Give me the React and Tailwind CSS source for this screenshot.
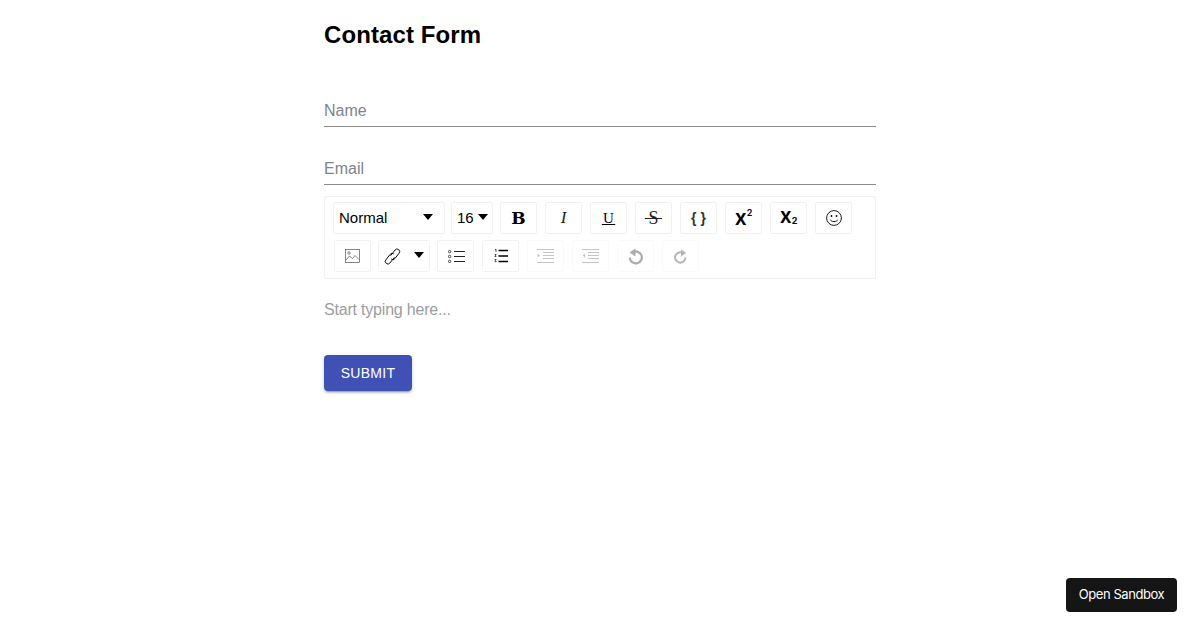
const Caret = ({ className = '' }) => (
  <span className={`w-0 h-0 border-x-[5.5px] border-x-transparent border-t-[6px] border-t-black ${className}`} />
);

const ToolButton = ({ children, dim }) => (
  <div className={`w-[37px] h-[32px] mx-[4px] flex items-center justify-center border rounded-[2px] ${dim ? 'border-[#fafafa]' : 'border-[#f1f1f1]'}`}>
    {children}
  </div>
);

const ImageIcon = () => (
  <svg width="15" height="14" viewBox="0 0 15 14" fill="none" stroke="#555" strokeWidth="0.7">
    <rect x="0.5" y="0.5" width="14" height="13" />
    <circle cx="4" cy="4" r="1.2" />
    <path d="M1 11l3.5-4 3 2.5 2.5-3 4 4" />
  </svg>
);

const LinkIcon = () => (
  <svg width="17" height="17" viewBox="0 0 16 16" fill="none" stroke="#000" strokeWidth="0.9">
    <path d="M6.2 7.2L10.4 1.9a2.4 2.4 0 0 1 3.4-.4 2.4 2.4 0 0 1 .4 3.4L10.2 10a2.4 2.4 0 0 1-3.4.4" />
    <path d="M9.8 8.8L5.6 14.1a2.4 2.4 0 0 1-3.4.4 2.4 2.4 0 0 1-.4-3.4L5.8 6a2.4 2.4 0 0 1 3.4-.4" />
  </svg>
);

const BulletIcon = () => (
  <svg className="ml-[1px]" width="17" height="13" viewBox="0 0 17 13" fill="none" stroke="#222">
    <circle cx="1.6" cy="1.6" r="1.2" strokeWidth="0.8" />
    <circle cx="1.6" cy="6.5" r="1.2" strokeWidth="0.8" />
    <circle cx="1.6" cy="11.4" r="1.2" strokeWidth="0.8" />
    <path d="M6 1.5h11M6 6.5h11M6 11.5h11" strokeWidth="1.1" />
  </svg>
);

const NumberIcon = () => (
  <svg width="14" height="14" viewBox="0 0 14 14" fill="none" stroke="#000">
    <path d="M4.5 1.5H14M4.5 7H14M4.5 12.5H14" strokeWidth="1.3" />
    <path d="M1 0.6l1-.3V3M0.6 5.6h1.6l-1.4 2h1.6M0.6 10.5h1.6l-.8 1 .8 1.2H.6" strokeWidth="0.7" />
  </svg>
);

const IndentIcon = ({ out }) => (
  <svg width="17" height="14" viewBox="0 0 17 14" fill="none" stroke="#c4c4c4">
    <path d="M0 0.5h17M6 3.5h11M6 6.5h11M6 9.5h11M0 13.5h17" />
    <path d={out ? 'M3 4.5v4L0.5 6.5z' : 'M0.5 4.5v4L3 6.5z'} fill="#c4c4c4" stroke="none" />
  </svg>
);

const UndoIcon = () => (
  <svg width="15" height="17" viewBox="0 0 15 17" fill="none">
    <path d="M4.2 4.6a6 6 0 1 1-2.4 5" stroke="#aaa" strokeWidth="2.2" />
    <path d="M7.5 0.4v8L1.6 4.4z" fill="#aaa" />
  </svg>
);

const RedoIcon = () => (
  <svg width="13" height="15" viewBox="0 0 13 15" fill="none">
    <path d="M9.3 4.2a5.2 5.2 0 1 0 2.2 4.3" stroke="#b4b4b4" strokeWidth="2" />
    <path d="M7 0.4v7l5.2-3.5z" fill="#b4b4b4" />
  </svg>
);

const SmileIcon = () => (
  <svg width="16" height="16" viewBox="0 0 16 16" fill="none" stroke="#000">
    <circle cx="8" cy="8" r="7.4" strokeWidth="0.9" />
    <circle cx="5.5" cy="6" r="0.9" fill="#000" stroke="none" />
    <circle cx="10.5" cy="6" r="0.9" fill="#000" stroke="none" />
    <path d="M4.2 9.6c1 2.6 6.6 2.6 7.6 0" strokeWidth="0.9" />
  </svg>
);

const App = () => {
  return (
    <div className="relative h-[630px] bg-white font-['Liberation_Sans',sans-serif]">
      <div className="w-[552px] mx-auto">
        <h1 className="pt-[20px] text-[24px] tracking-[0.1px] leading-[29px] font-bold text-black">Contact Form</h1>

        <div className="mt-[48px] h-[30px] pt-[2px] border-b border-[#8c8c8c] text-[16px] leading-[24px] text-[#80848a]">Name</div>
        <div className="mt-[28px] h-[30px] pt-[2px] border-b border-[#8c8c8c] text-[16px] leading-[24px] text-[#80848a]">Email</div>

        <div className="mt-[11px] h-[83px] border border-[#f1f1f1] rounded-[2px] pt-[5px] pl-[4px] flex flex-col gap-[6px]">
          <div className="flex">
            <div className="w-[112px] h-[32px] ml-[4px] mr-[6px] pl-[5px] pr-[11px] flex items-center justify-between border border-[#f1f1f1] rounded-[2px] text-[15px] text-black">
              Normal
              <Caret className="mb-[3px]" />
            </div>
            <div className="w-[42px] h-[32px] mr-[3px] pl-[5px] pr-[4px] flex items-center justify-between border border-[#f1f1f1] rounded-[2px] text-[15px] text-black">
              16
              <Caret className="mb-[3px]" />
            </div>
            <ToolButton><span className="font-['DejaVu_Serif',serif] font-bold text-[17px] leading-none text-black">B</span></ToolButton>
            <ToolButton><span className="font-['Liberation_Serif',serif] italic text-[17px] text-[#222]">I</span></ToolButton>
            <ToolButton><span className="font-['Liberation_Serif',serif] underline text-[15px] text-black whitespace-pre">{'\u200aU\u200a'}</span></ToolButton>
            <ToolButton><span className="font-['Liberation_Serif',serif] line-through text-[18px] text-[#222] whitespace-pre">{'\u2009S\u2009'}</span></ToolButton>
            <ToolButton><span className="font-bold text-[14px] text-[#333] whitespace-pre">{'{ }'}</span></ToolButton>
            <ToolButton>
              <span className="flex items-start text-black font-['Inter',sans-serif]">
                <span className="font-semibold text-[21px] leading-[21px] mt-[-1px]">x</span>
                <span className="text-[9px] leading-[9px] font-semibold">2</span>
              </span>
            </ToolButton>
            <ToolButton>
              <span className="flex items-start text-black font-['Inter',sans-serif]">
                <span className="font-semibold text-[21px] leading-[21px] mt-[-6px]">x</span>
                <span className="text-[9px] leading-[9px] font-bold mt-[5px]">2</span>
              </span>
            </ToolButton>
            <ToolButton><SmileIcon /></ToolButton>
          </div>
          <div className="flex pl-[1px]">
            <ToolButton><ImageIcon /></ToolButton>
            <div className="w-[52px] h-[32px] mx-[3px] pl-[5px] pr-[5px] flex items-center justify-between border border-[#f1f1f1] rounded-[2px]">
              <LinkIcon />
              <Caret className="mb-[3px]" />
            </div>
            <ToolButton><BulletIcon /></ToolButton>
            <ToolButton><NumberIcon /></ToolButton>
            <ToolButton dim><IndentIcon /></ToolButton>
            <ToolButton dim><IndentIcon out /></ToolButton>
            <ToolButton dim><UndoIcon /></ToolButton>
            <ToolButton dim><RedoIcon /></ToolButton>
          </div>
        </div>

        <div className="mt-[20px] text-[16px] tracking-[-0.2px] leading-[21px] text-[#9a9da0]">Start typing here...</div>

        <button className="mt-[35px] w-[88px] h-[36px] bg-[#3f51b5] rounded-[4px] text-[14px] tracking-[0.3px] text-white shadow-[0_3px_1px_-2px_rgba(0,0,0,0.2),0_2px_2px_0_rgba(0,0,0,0.14),0_1px_5px_0_rgba(0,0,0,0.12)]">
          SUBMIT
        </button>
      </div>

      <div className="absolute right-[23px] bottom-[18px] w-[111px] h-[34px] flex items-center justify-center bg-[#151515] rounded-[4px] font-['Inter',sans-serif] text-[13px] tracking-[-0.45px] text-white">
        Open Sandbox
      </div>
    </div>
  );
};

export default App;
